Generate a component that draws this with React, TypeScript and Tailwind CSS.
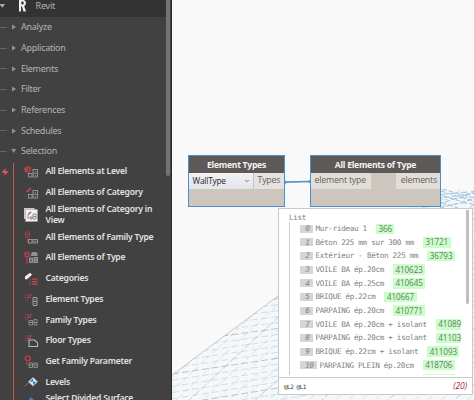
import React from "react";
import { Zap, ChevronDown } from "lucide-react";

const categories = ["Analyze", "Application", "Elements", "Filter", "References", "Schedules", "Selection"];

const items = [
  { icon: "level", label: "All Elements at Level" },
  { icon: "category", label: "All Elements of Category" },
  { icon: "view", label: "All Elements of Category in View" },
  { icon: "family", label: "All Elements of Family Type" },
  { icon: "type", label: "All Elements of Type" },
  { icon: "tag", label: "Categories" },
  { icon: "elementTypes", label: "Element Types" },
  { icon: "familyTypes", label: "Family Types" },
  { icon: "floor", label: "Floor Types" },
  { icon: "parameter", label: "Get Family Parameter" },
  { icon: "levels", label: "Levels" },
  { icon: "surface", label: "Select Divided Surface" },
];

// rows that don't use the regular height
const rowHeights: Record<string, string> = {
  view: "h-[24px]",
  surface: "h-[13px]",
};

const walls = [
  ["Mur-rideau 1", "366"],
  ["Béton 225 mm sur 300 mm", "31721"],
  ["Extérieur - Béton 225 mm", "36793"],
  ["VOILE BA ép.20cm", "410623"],
  ["VOILE BA ép.25cm", "410645"],
  ["BRIQUE ép.22cm", "410667"],
  ["PARPAING ép.20cm", "410771"],
  ["VOILE BA ép.20cm + isolant", "410899"],
  ["PARPAING ép.20cm + isolant", "411035"],
  ["BRIQUE ép.22cm + isolant", "411093"],
  ["PARPAING PLEIN ép.20cm", "418706"],
  ["PARPAING PLEIN ép.15cm", "418764"],
];

function Blocks({ tall = false }: { tall?: boolean }) {
  return (
    <g fill="none" stroke="#9b9b9b" strokeWidth="0.9">
      <rect x="4.5" y="8.5" width="3.5" height="3.5" />
      <rect x="9" y={tall ? 4.5 : 8.5} width="4.5" height={tall ? 7.5 : 3.5} />
      <path d={tall ? "M9 8.3h4.5M11.3 6v1M11.3 10v1" : "M10 10.3h2.5"} />
    </g>
  );
}

function NodeIcon({ name }: { name: string }) {
  return (
    <svg className="h-[14px] w-[15px] shrink-0" viewBox="0 0 15 14">
      {name === "level" && (
        <>
          <circle cx="3.7" cy="4.5" r="3.3" fill="#b8434b" />
          <path d="M3 2.5l2.4 1.8L3.7 7" stroke="#513438" fill="none" />
          <Blocks tall />
        </>
      )}
      {name === "category" && (
        <>
          <path d="M2 5.5L6 1.7l1.5 1.1-4 4z" fill="#c9454d" />
          <path d="M1.6 8v4" stroke="#814347" strokeWidth="0.8" />
          <Blocks tall />
        </>
      )}
      {name === "view" && (
        <>
          <path d="M0 0h10.5v11H0z" fill="#c9c9c9" />
          <path d="M1.5 1.5h12v12h-12z" fill="#f4f1ef" stroke="#a5a5a5" strokeWidth="0.5" />
          <path d="M4 6.5L7 4" stroke="#ba4b50" strokeWidth="1.5" />
          <path d="M4 7v4M6 9h2v2H6zM9 6h3v5H9zM9 8.5h3" fill="none" stroke="#777" strokeWidth="0.8" />
        </>
      )}
      {name === "family" && (
        <>
          <path d="M1.5 1h4v5h-4zM1.5 3.5h4M3.5 6v6" fill="none" stroke="#a13e48" />
          <Blocks />
        </>
      )}
      {name === "type" && (
        <>
          <path d="M1 1.5h4v4H1zM3 5.5V13M1 3.5h4" fill="none" stroke="#b63f4b" strokeWidth="1.2" />
          <path d="M7 5V2.5L8.5 1H12l1.5 1.5V5z" fill="#929292" />
          <path d="M5.5 7h3.2v4.5H5.5zM10 6.5h3.5v5H10zM10 9h3.5" fill="#6d6d6d" stroke="#a0a0a0" strokeWidth="0.9" />
        </>
      )}
      {name === "tag" && (
        <>
          <path d="M1 4.5L6 .7l2 2.1-5 4.4H1z" fill="#f2f0ef" />
          <path d="M5.5 7.2h1.2m1.3 0h5.5M5.5 9.6h1.2m1.3 0h5.5M5.5 12h1.2m1.3 0h5.5" stroke="#c4464e" strokeWidth="1.3" />
        </>
      )}
      {["elementTypes", "familyTypes", "floor"].includes(name) && (
        <path d="M1 2h1m1 0h5M1 4.4h1m1 0h4M1 6.8h1m1 0h1" stroke="#b9444c" strokeWidth="1.1" />
      )}
      {name === "elementTypes" && (
        <path d="M9 4.5h4v8H9zM9 8.5h4M11 6v1.2m0 2.8v1.2" fill="none" stroke="#9e9e9e" />
      )}
      {name === "familyTypes" && (
        <path d="M5 7.5h3.5V12H5zM10 6.5h3V12h-3zM5 9.5h3.5M10 9.5h3" fill="none" stroke="#8c8c8c" />
      )}
      {name === "floor" && (
        <path d="M5 6h5.5l3 2.7v3.8H5z" fill="none" stroke="#b9b9b9" strokeWidth="1.1" />
      )}
      {name === "parameter" && (
        <>
          <circle cx="3.8" cy="3.5" r="2.5" fill="none" stroke="#b53f4a" strokeWidth="1.7" />
          <path d="M2.5 7v3" stroke="#b53f4a" />
          <path d="M5 8h3.5v4.5H5zM10 8h3.3v4.5H10zM5 10h3.5M10 10h3.3" fill="none" stroke="#8c8c8c" />
        </>
      )}
      {name === "levels" && (
        <>
          <path d="M.5 11.5L5 7.5" stroke="#9a7775" strokeWidth="0.8" />
          <path d="M9 2.3l4.8 4.5L9 11.3 4.2 6.8z" fill="#d7e7f3" />
          <path d="M9 3.3v3.5H5.6zM9 10.3V6.8h3.4z" fill="#347fb9" />
        </>
      )}
      {name === "surface" && <path d="M5 11.5V7l2-2 5 5-2 2z" fill="#477bb8" />}
    </svg>
  );
}

function Sidebar() {
  return (
    <div className="flex h-full w-[172px] shrink-0 overflow-hidden bg-[#414141] font-['Noto_Sans',sans-serif] text-[#b4b4b4]">
      <div className="flex w-[166px] shrink-0 flex-col">
        <div className="flex h-[17px] shrink-0 items-start bg-[#333333] text-[9px] leading-[11px] tracking-[-0.2px]">
          <svg className="h-[12px] w-[28px]" viewBox="0 0 28 12">
            <path d="M-1 4h6L2.5 7.8z" fill="#aaa" />
            <path d="M19.5 0h4.2q2.3.4 2.3 3 0 2.2-1.8 3l1.8 5.5h-2.6L22 6.5h-1v5h-2V0zM21.4 1.5v3h1.4q1-.3 1-1.5t-1-1.5z" fill="#f0f0f0" />
          </svg>
          <span className="pl-[7.5px]">Revit</span>
        </div>
        {categories.map((name) => (
          <div key={name} className="flex h-[20.7px] shrink-0 items-center text-[9px] leading-[12px] tracking-[-0.26px]">
            <div className="h-px w-[7px] bg-[#666]" />
            <svg className="ml-[4px] h-[6px] w-[6px]" viewBox="0 0 6 6">
              <path d={name === "Selection" ? "M.3 1h4.8L2.7 5z" : "M1 .5v5L5 3z"} fill="#949494" />
            </svg>
            <span className="pl-1">{name}</span>
          </div>
        ))}
        <div className="flex min-h-0 grow">
          <div className="flex w-[13px] shrink-0 justify-center pt-[5px]">
            <Zap className="mr-[4px] h-[10px] w-[8px] fill-[#dd5963] text-[#dd5963]" strokeWidth={1} />
          </div>
          <div className="mt-[1px] w-px shrink-0 bg-[#ce5256]" />
          <div className="flex grow flex-col">
            {items.map((item) => (
              <div
                key={item.label}
                className={"flex shrink-0 items-center pl-[9.5px] " + (rowHeights[item.icon] ?? "h-[20.7px]")}
              >
                <NodeIcon name={item.icon} />
                <span className="w-[120px] pl-[7px] text-[8.6px] leading-[11.5px] font-semibold tracking-[-0.23px] text-[#e2e2e2]">
                  {item.label}
                </span>
              </div>
            ))}
          </div>
        </div>
      </div>
      <div className="h-[176px] w-[4px] rounded-b-sm bg-[#747474]" />
      <div className="ml-auto w-px bg-[#292929]" />
    </div>
  );
}

const lines = Array.from({ length: 38 }, (_, i) => i);

function GridPlane() {
  return (
    <svg className="absolute inset-0 h-full w-full" viewBox="0 0 302 400">
      <defs>
        <clipPath id="plane">
          <path d="M0 375L250 189H302V400H0z" />
        </clipPath>
      </defs>
      <path d="M0 375L250 189H302V400H0z" fill="#f5f8fa" />
      <g clipPath="url(#plane)" fill="none">
        {lines.map((i) => (
          <path
            key={"a" + i}
            d={`M${-80 + i * 13} 430L${170 + i * 15} 188`}
            stroke={i % 5 === 0 ? "#b2b8bd" : "#c6d6de"}
            strokeWidth="0.7"
            strokeDasharray={i % 5 === 0 ? "8 2" : "5 3"}
          />
        ))}
        {lines.map((i) => (
          <path
            key={"b" + i}
            d={`M0 ${188 + i * 6.2}L302 ${164 + i * 5.5}`}
            stroke={i % 5 === 0 ? "#a4abb0" : "#c0d3dd"}
            strokeWidth="0.7"
            strokeDasharray="7 3"
          />
        ))}
        <path
          d="M262 189l40 12M250 190l52 15M245 202l57-9M270 189l32 9M260 206l42-13M268 208l34-9M256 198l30 10"
          stroke="#93bedf"
          strokeWidth="0.9"
          strokeDasharray="5 2"
        />
      </g>
      <path d="M0 375L106 296" stroke="#b3b3b3" strokeWidth="0.7" />
    </svg>
  );
}

function WatchPreview() {
  return (
    <div className="absolute top-[208px] left-[106px] flex h-[187px] w-[195px] flex-col border border-[#c9c9c9] bg-white">
      <div className="flex h-[168px] shrink-0 overflow-hidden font-['DejaVu_Sans_Mono',monospace] text-[7.6px] tracking-[-0.29px] text-[#808080]">
        <div className="flex w-[182px] shrink-0 flex-col overflow-hidden pl-[10px]">
          <div className="h-[13px] pt-[4px] leading-[10px]">List</div>
          <div className="flex h-[153px] flex-col overflow-hidden border-l border-[#ccc]">
            {walls.map(([name, id], i) => (
              <div key={id} className="flex h-[13.65px] shrink-0 items-center pl-[10px] whitespace-pre">
                <span className={"flex h-[8px] shrink-0 items-center justify-end bg-[#d5d5d5] pr-[3px] italic " + (i > 9 ? "w-[16.5px]" : "w-[12.5px]")}>{i}</span>
                <span className="pl-[3px]">{name}</span>
                <span className="ml-[9px] flex h-[10.5px] shrink-0 items-center bg-[#c7ffc7] px-[2.5px] font-['Open_Sans',sans-serif] text-[8.1px] tracking-[-0.1px] text-[#6c776c]">{id}</span>
              </div>
            ))}
          </div>
        </div>
        <div className="mt-px ml-[4.5px] h-[94px] w-[3.5px] rounded-b-sm bg-[#bfbfbf]" />
      </div>
      <div className="flex grow items-center justify-between border-t border-[#ccc] pr-[5px] pl-[5px] font-['DejaVu_Sans_Mono',monospace] text-[6px] tracking-[-0.5px] text-[#333]">
        <span>@L2 @L1</span>
        <span className="font-['Open_Sans',sans-serif] text-[8.5px] tracking-[-0.1px] text-[#a52d3b] italic">(20)</span>
      </div>
    </div>
  );
}

function Canvas() {
  return (
    <div className="relative h-full grow overflow-hidden bg-[#f9f9f9] font-['Open_Sans',sans-serif]">
      <GridPlane />
      <svg className="absolute top-[176px] left-[111px] h-[12px] w-[30px]" viewBox="0 0 30 12">
        <path d="M1 6.2L28 5.5" stroke="#4b93cc" strokeWidth="1.7" />
        <circle cx="2" cy="6.2" r="1.6" fill="#4b93cc" />
        <circle cx="27" cy="5.5" r="1.6" fill="#4b93cc" />
      </svg>
      <div className="absolute top-[155px] left-[16px] flex h-[52px] w-[97px] flex-col border border-[#4a91cc] bg-[#ccc6bf] whitespace-nowrap">
        <div className="flex h-[17px] shrink-0 items-center justify-center bg-[#5c5957] pt-px text-[8.6px] font-bold tracking-[-0.26px] text-[#f4f4f4]">Element Types</div>
        <div className="flex h-[16px] shrink-0 text-[8.8px] tracking-[-0.2px]">
          <div className="flex w-[65px] shrink-0 items-center justify-between border-r border-[#c5c5c8] bg-gradient-to-b from-[#f2f2f4] to-[#e3e5ec] pr-[3px] pl-[3.5px] text-[8.3px] text-[#222]">
            <span>WallType</span>
            <ChevronDown className="h-[6px] w-[6px] text-[#444]" strokeWidth={3} />
          </div>
          <div className="flex grow items-center bg-[#e5e2df] pl-[3.5px] text-[#66625e]">Types</div>
        </div>
      </div>
      <div className="absolute top-[155px] left-[138px] flex h-[52px] w-[131px] flex-col border border-[#4a91cc] bg-[#ccc6bf] whitespace-nowrap">
        <div className="flex h-[17px] shrink-0 items-center justify-center bg-[#5c5957] pt-px text-[8.6px] font-bold tracking-[-0.26px] text-[#f4f4f4]">All Elements of Type</div>
        <div className="flex h-[16px] shrink-0 justify-between text-[8.8px] tracking-[-0.2px] text-[#66625e]">
          <div className="flex w-[60px] items-center bg-[#e1ddd9] pl-[3.5px]">element type</div>
          <div className="flex w-[44px] items-center justify-end bg-[#e1ddd9] pr-[3px]">elements</div>
        </div>
      </div>
      <WatchPreview />
    </div>
  );
}

function App() {
  return (
    <div className="flex h-[400px] w-[474px] overflow-hidden">
      <Sidebar />
      <Canvas />
    </div>
  );
}

export default App;
